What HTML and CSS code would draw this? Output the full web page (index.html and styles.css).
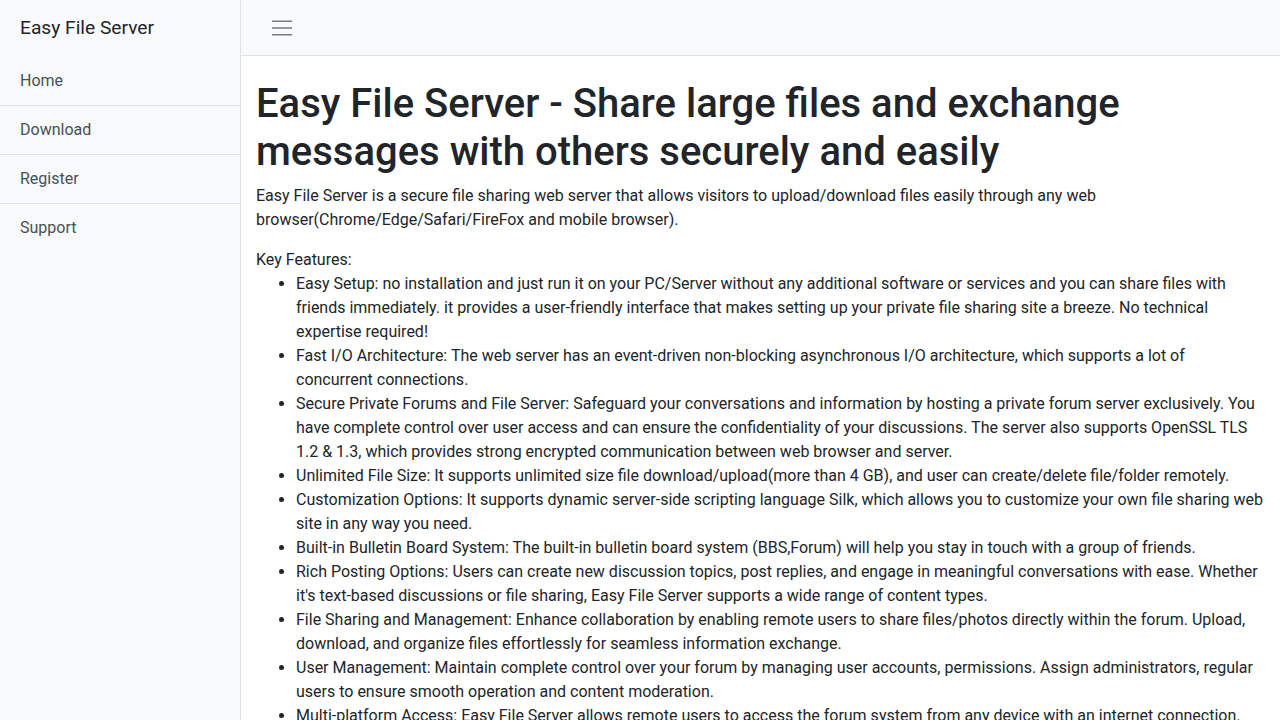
FILE: index.html
```html
<!DOCTYPE html>
<html lang="en">
<head>
<meta charset="utf-8">
<title>Easy File Server</title>
<link rel="stylesheet" href="styles.css">
</head>
<body>
<div class="wrapper">
  <aside class="sidebar">
    <div class="sidebar-heading">Easy File Server</div>
    <nav class="list-group">
      <a class="list-item" href="#">Home</a>
      <a class="list-item" href="#">Download</a>
      <a class="list-item" href="#">Register</a>
      <a class="list-item" href="#">Support</a>
    </nav>
  </aside>
  <div class="page">
    <header class="navbar">
      <button class="toggler" type="button" aria-label="Toggle navigation">
        <svg width="20" height="16" viewBox="0 0 20 16" aria-hidden="true"><path stroke="rgba(33,37,41,0.6)" stroke-width="1.6" fill="none" d="M0 1.3h20M0 8h20M0 14.7h20"/></svg>
      </button>
    </header>
    <main class="content">
      <h1 class="title">Easy File Server - Share large files and exchange messages with others securely and easily</h1>
      <p class="intro">Easy File Server is a secure file sharing web server that allows visitors to upload/download files easily through any web browser(Chrome/Edge/Safari/FireFox and mobile browser).</p>
      <div class="features-label">Key Features:</div>
      <ul class="features">
        <li>Easy Setup: no installation and just run it on your PC/Server without any additional software or services and you can share files with friends immediately. it provides a user-friendly interface that makes setting up your private file sharing site a breeze. No technical expertise required!</li>
        <li>Fast I/O Architecture: The web server has an event-driven non-blocking asynchronous I/O architecture, which supports a lot of concurrent connections.</li>
        <li>Secure Private Forums and File Server: Safeguard your conversations and information by hosting a private forum server exclusively. You have complete control over user access and can ensure the confidentiality of your discussions. The server also supports OpenSSL TLS 1.2 &amp; 1.3, which provides strong encrypted communication between web browser and server.</li>
        <li>Unlimited File Size: It supports unlimited size file download/upload(more than 4 GB), and user can create/delete file/folder remotely.</li>
        <li>Customization Options: It supports dynamic server-side scripting language Silk, which allows you to customize your own file sharing web site in any way you need.</li>
        <li>Built-in Bulletin Board System: The built-in bulletin board system (BBS,Forum) will help you stay in touch with a group of friends.</li>
        <li>Rich Posting Options: Users can create new discussion topics, post replies, and engage in meaningful conversations with ease. Whether it's text-based discussions or file sharing, Easy File Server supports a wide range of content types.</li>
        <li>File Sharing and Management: Enhance collaboration by enabling remote users to share files/photos directly within the forum. Upload, download, and organize files effortlessly for seamless information exchange.</li>
        <li>User Management: Maintain complete control over your forum by managing user accounts, permissions. Assign administrators, regular users to ensure smooth operation and content moderation.</li>
        <li>Multi-platform Access: Easy File Server allows remote users to access the forum system from any device with an internet connection.</li>
      </ul>
    </main>
  </div>
</div>
</body>
</html>
```
FILE: styles.css
```css
* { box-sizing: border-box; }
html, body { margin: 0; padding: 0; }
body {
  font-family: Roboto, "Liberation Sans", sans-serif;
  font-size: 16px;
  line-height: 1.5;
  color: #212529;
  background: #fff;
}
.wrapper {
  display: flex;
  min-height: 100vh;
}
.sidebar {
  flex: 0 0 241px;
  background: #f8f9fa;
  border-right: 1px solid #dee2e6;
}
.sidebar-heading {
  padding: 14px 20px;
  font-size: 19.2px;
  line-height: 28.8px;
  color: #212529;
}
.list-group {
  display: flex;
  flex-direction: column;
}
.list-item {
  display: block;
  padding: 12px 20px;
  color: #495057;
  text-decoration: none;
  border-bottom: 1px solid #dee2e6;
  background: #f8f9fa;
}
.list-item:last-child { border-bottom: 0; }
.page {
  flex: 1 1 auto;
  min-width: 0;
}
.navbar {
  height: 56px;
  background: #f8f9fa;
  border-bottom: 1px solid #dee2e6;
  display: flex;
  align-items: center;
  padding: 0 15px;
}
.toggler {
  background: transparent;
  border: 0;
  padding: 4px 16px;
  margin: 0;
  display: flex;
  align-items: center;
  cursor: pointer;
}
.toggler svg { display: block; }
.content {
  padding: 0 15px;
}
.title {
  margin: 24px 0 8px;
  font-size: 40px;
  font-weight: 500;
  line-height: 1.2;
}
.intro {
  margin: 0 0 16px;
}
.features {
  margin: 0;
  padding-left: 40px;
}
```
